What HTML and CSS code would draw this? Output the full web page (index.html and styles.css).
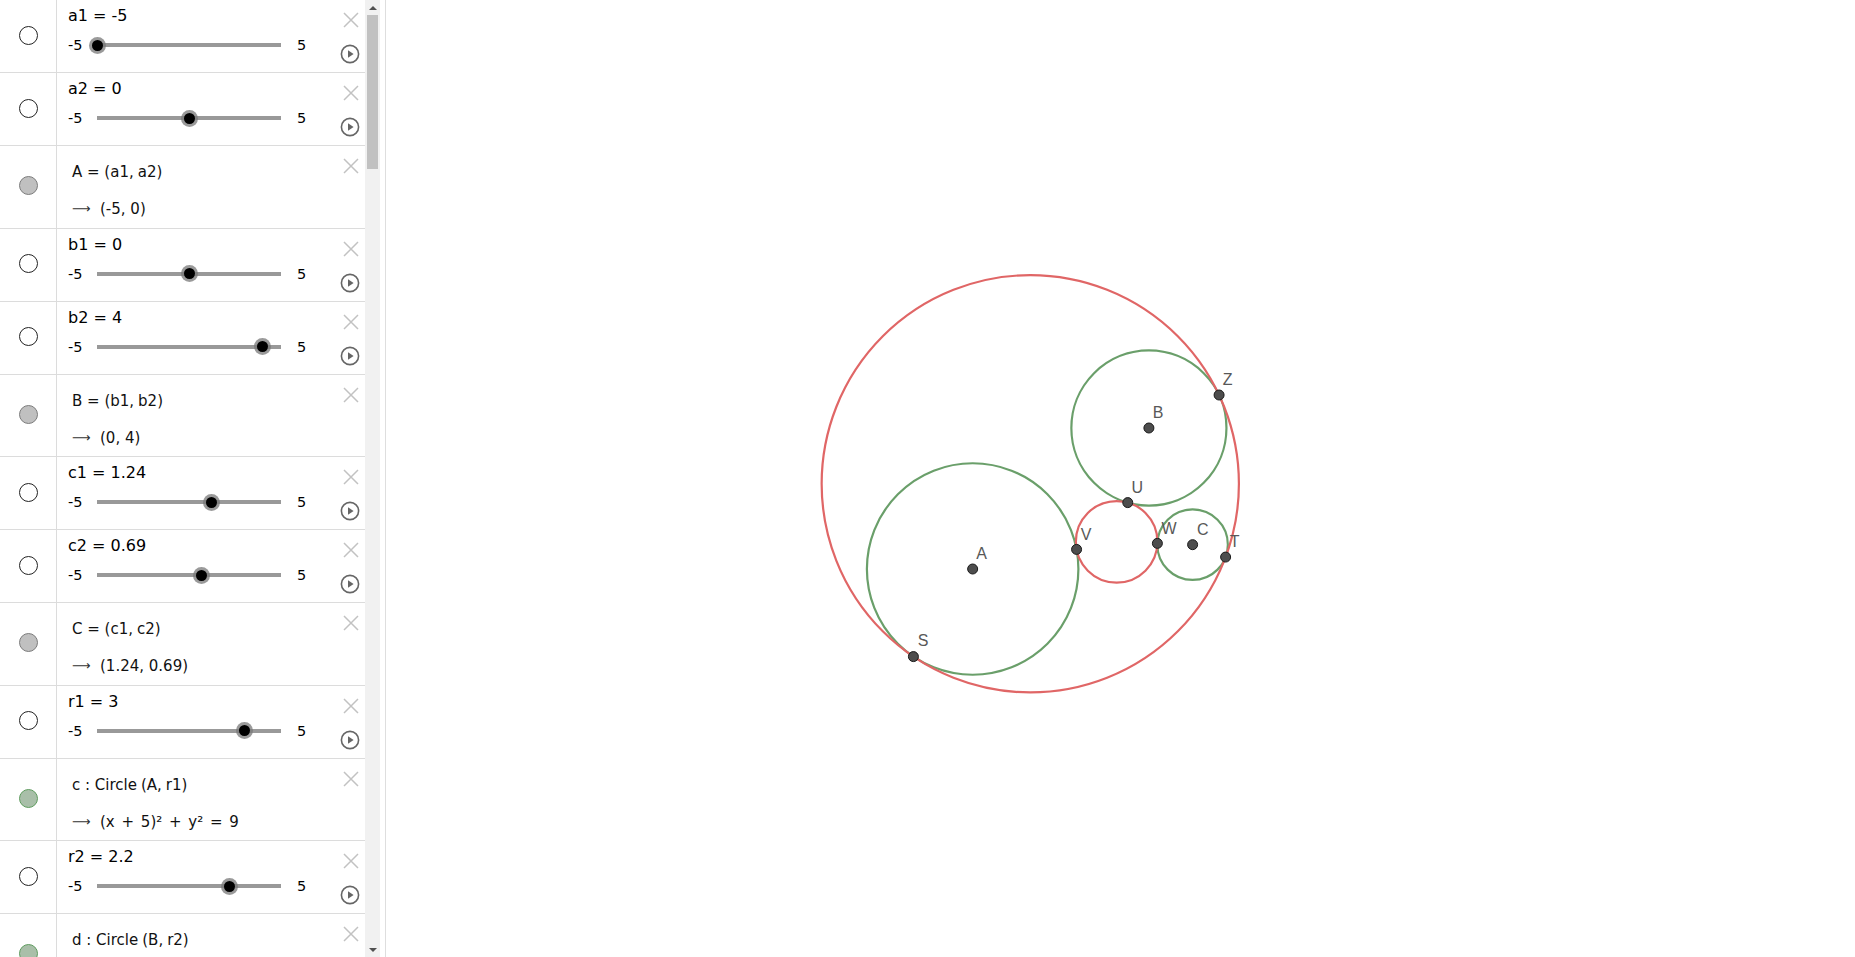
FILE: index.html
```html
<!DOCTYPE html>
<html>
<head>
<meta charset="utf-8">
<link rel="stylesheet" href="styles.css">
</head>
<body>
<div class="app">
  <aside class="algebra">
    <div class="list">
      <div class="row slider-row">
        <div class="mk"><span class="dot dot-white"></span></div>
        <div class="body">
          <div class="title">a1 = -5</div>
          <div class="slider"><span class="min">-5</span><span class="track"><span class="thumb" style="left:0%"></span></span><span class="max">5</span></div>
        </div>
        <div class="side">
          <svg class="x" width="16" height="16" viewBox="0 0 16 16"><path d="M1 1L15 15M15 1L1 15"/></svg>
          <svg class="play" width="20" height="20" viewBox="0 0 20 20"><circle cx="10" cy="10" r="8.6"/><path d="M8 6.3L13.6 10L8 13.7Z"/></svg>
        </div>
      </div>
      <div class="row slider-row">
        <div class="mk"><span class="dot dot-white"></span></div>
        <div class="body">
          <div class="title">a2 = 0</div>
          <div class="slider"><span class="min">-5</span><span class="track"><span class="thumb" style="left:50%"></span></span><span class="max">5</span></div>
        </div>
        <div class="side">
          <svg class="x" width="16" height="16" viewBox="0 0 16 16"><path d="M1 1L15 15M15 1L1 15"/></svg>
          <svg class="play" width="20" height="20" viewBox="0 0 20 20"><circle cx="10" cy="10" r="8.6"/><path d="M8 6.3L13.6 10L8 13.7Z"/></svg>
        </div>
      </div>
      <div class="row expr-row">
        <div class="mk"><span class="dot dot-gray"></span></div>
        <div class="body expr">
          <div class="def">A = (a1,<span class="thin"></span>a2)</div>
          <div class="out"><span class="arr">⟶</span>(-5, 0)</div>
        </div>
        <div class="side">
          <svg class="x" width="16" height="16" viewBox="0 0 16 16"><path d="M1 1L15 15M15 1L1 15"/></svg>
        </div>
      </div>
      <div class="row slider-row">
        <div class="mk"><span class="dot dot-white"></span></div>
        <div class="body">
          <div class="title">b1 = 0</div>
          <div class="slider"><span class="min">-5</span><span class="track"><span class="thumb" style="left:50%"></span></span><span class="max">5</span></div>
        </div>
        <div class="side">
          <svg class="x" width="16" height="16" viewBox="0 0 16 16"><path d="M1 1L15 15M15 1L1 15"/></svg>
          <svg class="play" width="20" height="20" viewBox="0 0 20 20"><circle cx="10" cy="10" r="8.6"/><path d="M8 6.3L13.6 10L8 13.7Z"/></svg>
        </div>
      </div>
      <div class="row slider-row">
        <div class="mk"><span class="dot dot-white"></span></div>
        <div class="body">
          <div class="title">b2 = 4</div>
          <div class="slider"><span class="min">-5</span><span class="track"><span class="thumb" style="left:90%"></span></span><span class="max">5</span></div>
        </div>
        <div class="side">
          <svg class="x" width="16" height="16" viewBox="0 0 16 16"><path d="M1 1L15 15M15 1L1 15"/></svg>
          <svg class="play" width="20" height="20" viewBox="0 0 20 20"><circle cx="10" cy="10" r="8.6"/><path d="M8 6.3L13.6 10L8 13.7Z"/></svg>
        </div>
      </div>
      <div class="row expr-row">
        <div class="mk"><span class="dot dot-gray"></span></div>
        <div class="body expr">
          <div class="def">B = (b1,<span class="thin"></span>b2)</div>
          <div class="out"><span class="arr">⟶</span>(0, 4)</div>
        </div>
        <div class="side">
          <svg class="x" width="16" height="16" viewBox="0 0 16 16"><path d="M1 1L15 15M15 1L1 15"/></svg>
        </div>
      </div>
      <div class="row slider-row">
        <div class="mk"><span class="dot dot-white"></span></div>
        <div class="body">
          <div class="title">c1 = 1.24</div>
          <div class="slider"><span class="min">-5</span><span class="track"><span class="thumb" style="left:62.4%"></span></span><span class="max">5</span></div>
        </div>
        <div class="side">
          <svg class="x" width="16" height="16" viewBox="0 0 16 16"><path d="M1 1L15 15M15 1L1 15"/></svg>
          <svg class="play" width="20" height="20" viewBox="0 0 20 20"><circle cx="10" cy="10" r="8.6"/><path d="M8 6.3L13.6 10L8 13.7Z"/></svg>
        </div>
      </div>
      <div class="row slider-row">
        <div class="mk"><span class="dot dot-white"></span></div>
        <div class="body">
          <div class="title">c2 = 0.69</div>
          <div class="slider"><span class="min">-5</span><span class="track"><span class="thumb" style="left:56.9%"></span></span><span class="max">5</span></div>
        </div>
        <div class="side">
          <svg class="x" width="16" height="16" viewBox="0 0 16 16"><path d="M1 1L15 15M15 1L1 15"/></svg>
          <svg class="play" width="20" height="20" viewBox="0 0 20 20"><circle cx="10" cy="10" r="8.6"/><path d="M8 6.3L13.6 10L8 13.7Z"/></svg>
        </div>
      </div>
      <div class="row expr-row">
        <div class="mk"><span class="dot dot-gray"></span></div>
        <div class="body expr">
          <div class="def">C = (c1,<span class="thin"></span>c2)</div>
          <div class="out"><span class="arr">⟶</span>(1.24, 0.69)</div>
        </div>
        <div class="side">
          <svg class="x" width="16" height="16" viewBox="0 0 16 16"><path d="M1 1L15 15M15 1L1 15"/></svg>
        </div>
      </div>
      <div class="row slider-row">
        <div class="mk"><span class="dot dot-white"></span></div>
        <div class="body">
          <div class="title">r1 = 3</div>
          <div class="slider"><span class="min">-5</span><span class="track"><span class="thumb" style="left:80%"></span></span><span class="max">5</span></div>
        </div>
        <div class="side">
          <svg class="x" width="16" height="16" viewBox="0 0 16 16"><path d="M1 1L15 15M15 1L1 15"/></svg>
          <svg class="play" width="20" height="20" viewBox="0 0 20 20"><circle cx="10" cy="10" r="8.6"/><path d="M8 6.3L13.6 10L8 13.7Z"/></svg>
        </div>
      </div>
      <div class="row expr-row">
        <div class="mk"><span class="dot dot-green"></span></div>
        <div class="body expr">
          <div class="def">c : Circle<span class="thin"></span>(A,<span class="thin"></span>r1)</div>
          <div class="out"><span class="arr">⟶</span><span class="eq">(x + 5)² + y² = 9</span></div>
        </div>
        <div class="side">
          <svg class="x" width="16" height="16" viewBox="0 0 16 16"><path d="M1 1L15 15M15 1L1 15"/></svg>
        </div>
      </div>
      <div class="row slider-row">
        <div class="mk"><span class="dot dot-white"></span></div>
        <div class="body">
          <div class="title">r2 = 2.2</div>
          <div class="slider"><span class="min">-5</span><span class="track"><span class="thumb" style="left:72%"></span></span><span class="max">5</span></div>
        </div>
        <div class="side">
          <svg class="x" width="16" height="16" viewBox="0 0 16 16"><path d="M1 1L15 15M15 1L1 15"/></svg>
          <svg class="play" width="20" height="20" viewBox="0 0 20 20"><circle cx="10" cy="10" r="8.6"/><path d="M8 6.3L13.6 10L8 13.7Z"/></svg>
        </div>
      </div>
      <div class="row expr-row">
        <div class="mk"><span class="dot dot-green"></span></div>
        <div class="body expr">
          <div class="def">d : Circle<span class="thin"></span>(B,<span class="thin"></span>r2)</div>
        </div>
        <div class="side">
          <svg class="x" width="16" height="16" viewBox="0 0 16 16"><path d="M1 1L15 15M15 1L1 15"/></svg>
        </div>
      </div>
    </div>
    <div class="scrollbar">
      <div class="sb-btn"><span class="tri-up"></span></div>
      <div class="sb-thumb"></div>
      <div class="sb-fill"></div>
      <div class="sb-btn"><span class="tri-down"></span></div>
    </div>
  </aside>
  <main class="graphics">
    <svg class="canvas" width="1469" height="957" viewBox="386 0 1469 957">
      <g class="green">
        <circle cx="972.65" cy="569" r="105.75"/>
        <circle cx="1148.9" cy="428" r="77.55"/>
        <circle cx="1192.61" cy="544.68" r="35.25"/>
      </g>
      <g class="red">
        <circle cx="1030.28" cy="483.78" r="208.63"/>
        <circle cx="1116.64" cy="541.84" r="40.78"/>
      </g>
      <g class="pts">
        <circle cx="972.65" cy="569" r="5"/>
        <circle cx="1148.9" cy="428" r="5"/>
        <circle cx="1192.61" cy="544.68" r="5"/>
        <circle cx="913.41" cy="656.6" r="5"/>
        <circle cx="1219.08" cy="395" r="5"/>
        <circle cx="1225.61" cy="557.06" r="5"/>
        <circle cx="1076.57" cy="549.4" r="5"/>
        <circle cx="1127.76" cy="502.61" r="5"/>
        <circle cx="1157.38" cy="543.36" r="5"/>
      </g>
      <g class="lbl">
        <text x="981.7" y="553.3">A</text>
        <text x="1158" y="412.3">B</text>
        <text x="1202.7" y="529.3">C</text>
        <text x="923" y="640">S</text>
        <text x="1227.7" y="379.3">Z</text>
        <text x="1234.7" y="541">T</text>
        <text x="1086" y="534">V</text>
        <text x="1137.3" y="487.3">U</text>
        <text x="1169" y="528.7">W</text>
      </g>
    </svg>
  </main>
</div>
</body>
</html>
```
FILE: styles.css
```css
html, body {
  margin: 0;
  padding: 0;
  background: #ffffff;
  overflow: hidden;
}
body {
  font-family: "DejaVu Sans", "Noto Sans", sans-serif;
  color: #000;
}
.app {
  display: flex;
  width: 1855px;
  height: 957px;
  overflow: hidden;
}
.algebra {
  flex: none;
  width: 385px;
  height: 957px;
  display: flex;
  border-right: 1px solid #dedede;
  box-sizing: content-box;
  overflow: hidden;
}
.list {
  width: 365px;
  flex: none;
  height: 957px;
  overflow: hidden;
}
.row {
  display: flex;
  box-sizing: border-box;
  border-bottom: 1px solid #dcdcdc;
}
.slider-row { height: 73px; }
.expr-row { height: 82.5px; }
.mk {
  flex: none;
  width: 56px;
  border-right: 1px solid #dcdcdc;
  display: flex;
  align-items: center;
  justify-content: center;
}
.dot {
  display: block;
  width: 17px;
  height: 17px;
  border-radius: 50%;
  margin-top: -2px;
}
.dot-white { background: #fff; border: 1px solid #222; }
.dot-gray { background: #c0c0c0; border: 1px solid #7c7c7c; }
.dot-green { background: #a9bfa9; border: 1px solid #5f9c5f; }
.body {
  flex: 1;
  padding-left: 11px;
  min-width: 0;
}
.title {
  padding-top: 6px;
  font-size: 16px;
  line-height: 20px;
  white-space: nowrap;
}
.slider {
  display: flex;
  align-items: center;
  height: 20px;
  margin-top: 9px;
  font-size: 14.5px;
}
.min { width: 29px; flex: none; }
.track {
  position: relative;
  width: 184px;
  height: 4px;
  background: #999999;
  flex: none;
}
.thumb {
  position: absolute;
  top: 50%;
  width: 11px;
  height: 11px;
  margin: -5.5px 0 0 -5.5px;
  border-radius: 50%;
  background: #000;
  box-shadow: 0 0 0 3px rgba(120, 120, 120, 0.75);
}
.max { margin-left: 16px; }
.expr {
  padding-left: 15px;
  padding-top: 15px;
  font-size: 15px;
  white-space: nowrap;
  color: #111;
}
.def { line-height: 22px; }
.thin { display: inline-block; width: 4px; }
.out { line-height: 22px; margin-top: 15px; }
.eq { word-spacing: 2px; }
.arr {
  display: inline-block;
  width: 28px;
  font-size: 13px;
  color: #333;
  vertical-align: 1px;
}
.side {
  flex: none;
  width: 25px;
  display: flex;
  flex-direction: column;
  padding-top: 12px;
  box-sizing: border-box;
}
.x {
  margin-left: 3px;
  fill: none;
  stroke: #c2c2c2;
  stroke-width: 1.5;
}
.play {
  margin-top: 16px;
  fill: none;
  stroke: #666;
  stroke-width: 1.6;
}
.play path { fill: #666; stroke: none; }
.scrollbar {
  flex: none;
  width: 15px;
  height: 957px;
  background: #f1f1f1;
  display: flex;
  flex-direction: column;
  margin-right: 5px;
}
.sb-btn {
  height: 15px;
  flex: none;
  display: flex;
  align-items: center;
  justify-content: center;
}
.tri-up, .tri-down {
  width: 0;
  height: 0;
  border-left: 4px solid transparent;
  border-right: 4px solid transparent;
}
.tri-up { border-bottom: 4px solid #505050; }
.tri-down { border-top: 4px solid #505050; }
.sb-thumb {
  flex: none;
  height: 154px;
  margin: 0 2px;
  background: #c1c1c1;
}
.sb-fill { flex: 1; }
.graphics {
  flex: 1;
  height: 957px;
}
.canvas { display: block; }
.green circle { fill: none; stroke: #6a9f6a; stroke-width: 2.2; }
.red circle { fill: none; stroke: #e06666; stroke-width: 2.2; }
.pts circle { fill: #4d4d4d; stroke: #1a1a1a; stroke-width: 1; }
.lbl text {
  font-family: "Liberation Sans", Arial, sans-serif;
  font-size: 16px;
  fill: #585858;
  text-anchor: middle;
  dominant-baseline: central;
}
```
